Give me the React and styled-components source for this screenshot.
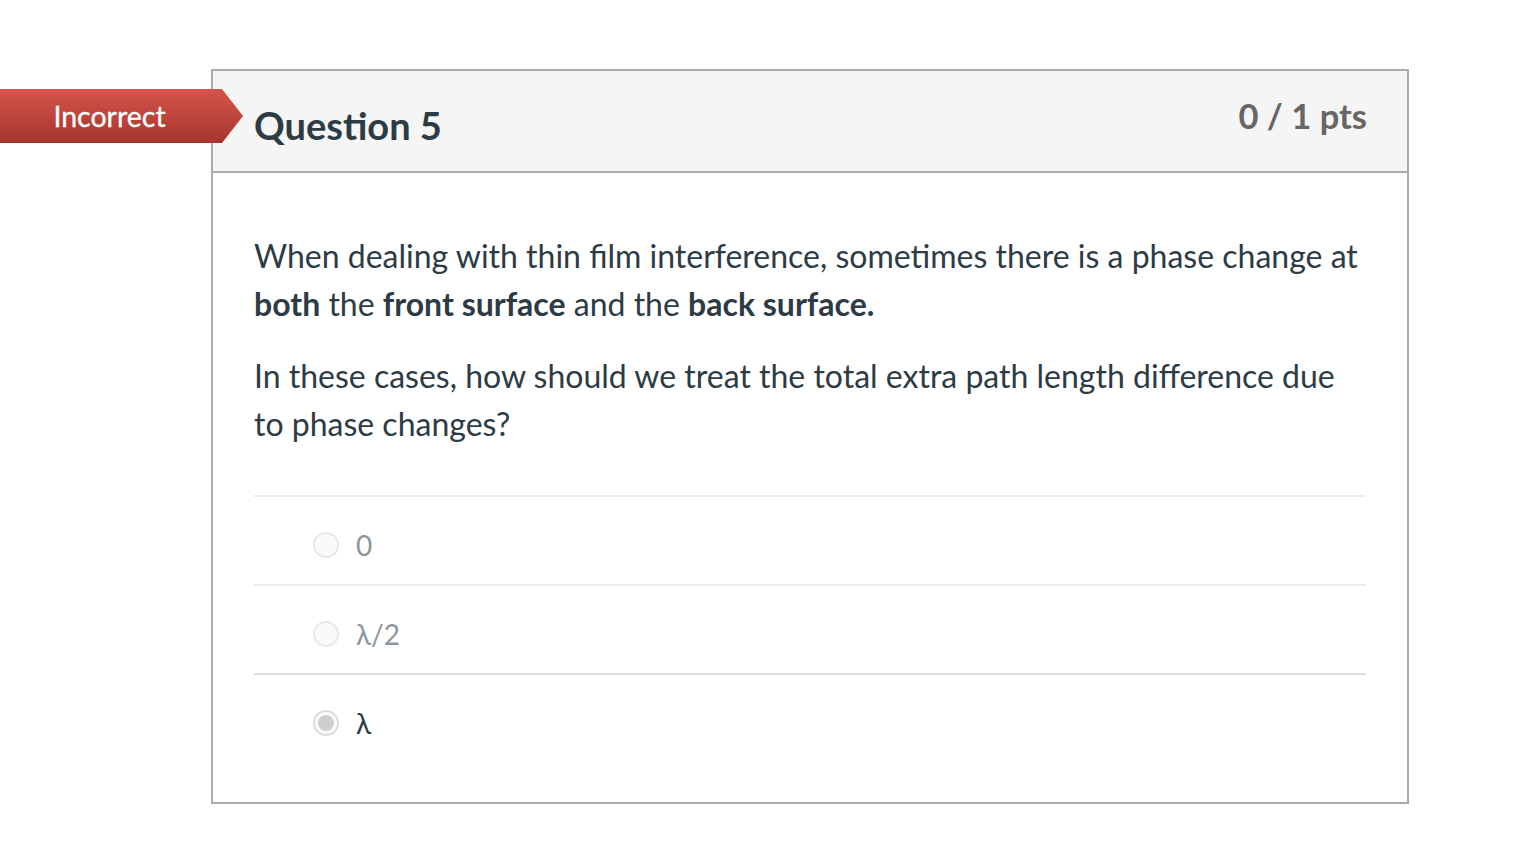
import React from "react";
import styled, { createGlobalStyle } from "styled-components";

const Global = createGlobalStyle`
  html, body { margin: 0; padding: 0; background: #fff; }
  body { font-family: Lato, "Open Sans", sans-serif; color: #2d3b45; }
`;

const Page = styled.div`
  padding: 69px 0 0 211px;
  width: 1528px;
  height: 864px;
  box-sizing: border-box;
`;

const Card = styled.section`
  position: relative;
  width: 1198px;
  box-sizing: border-box;
  border: 2px solid #aaaaaa;
  background: #fff;
`;

const Header = styled.header`
  display: flex;
  justify-content: space-between;
  align-items: flex-start;
  height: 100px;
  padding: 0 40px 0 41px;
  background: #f5f5f5;
  border-bottom: 2px solid #aaaaaa;
`;

const Title = styled.h2`
  margin: 0;
  padding-top: 32px;
  font-size: 38px;
  line-height: 44px;
  font-weight: 700;
  color: #2d3b45;
`;

const Points = styled.div`
  padding-top: 25px;
  font-size: 34.5px;
  line-height: 40px;
  font-weight: 700;
  color: #666666;
`;

const Banner = styled.div`
  position: absolute;
  left: -213px;
  top: 18px;
  width: 243px;
  height: 54px;
  box-sizing: border-box;
  padding-right: 24px;
  display: flex;
  align-items: center;
  justify-content: center;
  background: linear-gradient(#d6544b, #a6352e);
  clip-path: polygon(0 0, 222px 0, 243px 50%, 222px 100%, 0 100%);
  color: #fff;
  font-size: 28.5px;
  font-weight: 400;
  -webkit-text-stroke: 0.3px #fff;
`;

const Body = styled.div`
  padding: 59px 41px 40px 41px;
`;

const Para = styled.p`
  margin: 0 0 24px 0;
  font-size: 32px;
  line-height: 48px;
  color: #2d3b45;
  &:last-of-type { margin-bottom: 0; }
  strong { font-weight: 700; }
`;

const Answers = styled.div`
  margin-top: 47px;
`;

const Row = styled.div`
  display: flex;
  align-items: center;
  height: 89px;
  box-sizing: border-box;
  padding: 9px 0 0 59px;
  border-top: 2px solid ${(p) => (p.$strong ? "#dcdcdc" : "#ececec")};
`;

const Radio = styled.span`
  width: 26px;
  height: 26px;
  box-sizing: border-box;
  border-radius: 50%;
  border: 2px solid ${(p) => (p.$checked ? "#dcdcdc" : "#e8e8e8")};
  background: #fafafa;
  display: flex;
  align-items: center;
  justify-content: center;
  margin-right: 17px;
  &::after {
    content: "";
    display: ${(p) => (p.$checked ? "block" : "none")};
    width: 16px;
    height: 16px;
    border-radius: 50%;
    background: #cfcfcf;
  }
`;

const Label = styled.span`
  font-size: 28px;
  line-height: 34px;
  color: ${(p) => (p.$checked ? "#2d3b45" : "#8b969e")};
`;

const answers = [
  { text: "0", checked: false },
  { text: "λ/2", checked: false },
  { text: "λ", checked: true },
];

export default function App() {
  return (
    <>
      <Global />
      <Page>
        <Card>
          <Banner>Incorrect</Banner>
          <Header>
            <Title>Question 5</Title>
            <Points>0 / 1 pts</Points>
          </Header>
          <Body>
            <Para>
              When dealing with thin film interference, sometimes there is a phase change at{" "}
              <strong>both</strong> the <strong>front surface</strong> and the{" "}
              <strong>back surface.</strong>
            </Para>
            <Para>
              In these cases, how should we treat the total extra path length difference due to
              phase changes?
            </Para>
            <Answers>
              {answers.map((a, i) => (
                <Row key={i} $strong={i === 2}>
                  <Radio $checked={a.checked} />
                  <Label $checked={a.checked}>{a.text}</Label>
                </Row>
              ))}
            </Answers>
          </Body>
        </Card>
      </Page>
    </>
  );
}
